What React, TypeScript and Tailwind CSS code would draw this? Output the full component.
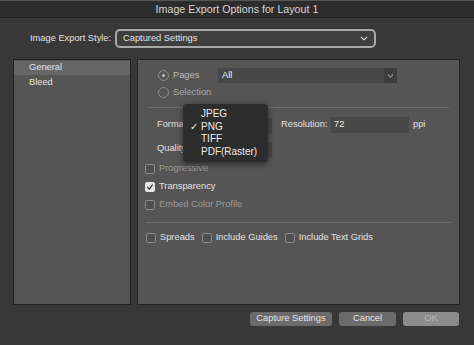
import React from 'react';

const Chevron = ({ className = '' }: { className?: string }) => (
    <svg viewBox="0 0 10 6" className={className} fill="none" stroke="currentColor" strokeWidth="1.4" strokeLinecap="round" strokeLinejoin="round">
        <path d="M1.5 1.2 L5 4.6 L8.5 1.2" />
    </svg>
);

const Checkbox = ({ checked, label, dim }: { checked?: boolean; label: string; dim?: boolean }) => (
    <div className="flex items-center gap-[4px] h-[10px]">
        <div className={`w-[10px] h-[10px] rounded-[2px] flex items-center justify-center ${checked ? 'bg-[#e6e6e6]' : 'border border-[#8a8a8a] bg-[#4f4f4f]'}`}>
            {checked && (
                <svg viewBox="0 0 10 10" className="w-[8px] h-[8px]" fill="none" stroke="#333" strokeWidth="1.6" strokeLinecap="round" strokeLinejoin="round">
                    <path d="M2 5.2 L4.2 7.6 L8 2.4" />
                </svg>
            )}
        </div>
        <span className={`whitespace-nowrap ${dim ? 'text-[#9a9a9a]' : 'text-[#e2e2e2]'}`}>{label}</span>
    </div>
);

const App: React.FC = () => {
    return (
        <div className="w-[474px] h-[345px] bg-[#383838] flex flex-col text-[9.3px] text-[#e2e2e2] overflow-hidden" style={{ fontFamily: '"Liberation Sans", Arial, sans-serif' }}>
            {/* title bar */}
            <div className="h-[18px] bg-[#2c2c2c] border-t border-[#555] border-b border-b-[#242424] flex items-center justify-center text-[10.7px] text-[#d6d6d6]">
                Image Export Options for Layout 1
            </div>

            {/* export style row */}
            <div className="flex items-center mt-[11px] h-[19px]">
                <span className="ml-[30px] w-[85px] whitespace-nowrap">Image Export Style:</span>
                <div className="w-[261px] h-[19px] rounded-[5px] border-2 border-[#a8a8a8] bg-[#3f3f3f] flex items-center justify-between pl-[6px] pr-[6px]">
                    <span>Captured Settings</span>
                    <Chevron className="w-[8px] h-[5px] text-[#ddd]" />
                </div>
            </div>

            {/* panels */}
            <div className="flex mt-[11px] ml-[13px] gap-[6px] h-[246px]">
                <div className="w-[118px] bg-[#555555] border border-[#222] flex flex-col pt-px">
                    <div className="h-[14px] bg-[#666666] pl-[15px] flex items-center">General</div>
                    <div className="h-[15px] pl-[15px] flex items-center">Bleed</div>
                </div>

                <div className="relative w-[323px] bg-[#555555] border border-[#222] flex flex-col">
                    {/* pages */}
                    <div className="flex flex-col gap-[2px] pt-[8px] pl-[20px]">
                        <div className="flex items-center h-[15px]">
                            <div className="w-[11px] h-[11px] rounded-full border border-[#8a8a8a] flex items-center justify-center">
                                <div className="w-[3px] h-[3px] rounded-full bg-[#bbb]" />
                            </div>
                            <span className="ml-[4px] text-[#bdbdbd] w-[45px]">Pages</span>
                            <div className="w-[179px] h-[15px] bg-[#474747] flex items-center justify-between pl-[4px]">
                                <span className="text-[#f0f0f0]">All</span>
                                <div className="w-[13px] h-[15px] bg-[#3d3d3d] flex items-center justify-center">
                                    <Chevron className="w-[7px] h-[4px] text-[#ccc]" />
                                </div>
                            </div>
                        </div>
                        <div className="flex items-center h-[15px]">
                            <div className="w-[11px] h-[11px] rounded-full border border-[#8a8a8a]" />
                            <span className="ml-[4px] text-[#a8a8a8]">Selection</span>
                        </div>
                    </div>

                    <div className="mt-[7px] mx-[10px] border-t border-[#6c6c6c]" />

                    {/* format / resolution */}
                    <div className="flex items-center mt-[9px] h-[16px] pl-[19px]">
                        <span className="w-[57px]">Format:</span>
                        <div className="w-[58px] h-[15px] bg-[#474747] flex items-center justify-end pr-[3px]">
                            <Chevron className="w-[6px] h-[4px] text-[#aaa]" />
                        </div>
                        <span className="ml-[9px] w-[50px] whitespace-nowrap">Resolution:</span>
                        <div className="w-[78px] h-[16px] bg-[#474747] flex items-center pl-[3px] text-[#f0f0f0]">72</div>
                        <span className="ml-[4px]">ppi</span>
                    </div>
                    <div className="flex items-center mt-[8px] h-[16px] pl-[19px]">
                        <span className="w-[57px]">Quality:</span>
                        <div className="w-[58px] h-[15px] bg-[#474747] flex items-center justify-end pr-[3px]">
                            <Chevron className="w-[6px] h-[4px] text-[#aaa]" />
                        </div>
                    </div>

                    {/* checkboxes */}
                    <div className="flex flex-col gap-[8px] mt-[7px] pl-[7px]">
                        <Checkbox label="Progressive" dim />
                        <Checkbox label="Transparency" checked />
                        <Checkbox label="Embed Color Profile" dim />
                    </div>

                    <div className="mt-[12px] mx-[8px] border-t border-[#6c6c6c]" />

                    <div className="flex items-center gap-[7px] mt-[10px] pl-[8px]">
                        <Checkbox label="Spreads" />
                        <Checkbox label="Include Guides" />
                        <Checkbox label="Include Text Grids" />
                    </div>

                    {/* format menu popup */}
                    <div className="absolute left-[45px] top-[44px] w-[85px] h-[58px] bg-[#2d2d2d] rounded-[4px] shadow-[0_2px_6px_rgba(0,0,0,0.5)] flex flex-col pt-[3px] text-[#ececec] text-[10px]">
                        {['JPEG', 'PNG', 'TIFF', 'PDF(Raster)'].map(item => (
                            <div key={item} className="h-[12.7px] flex items-center">
                                <span className="w-[18px] pl-[4px] text-center">{item === 'PNG' ? '✓' : ''}</span>
                                <span>{item}</span>
                            </div>
                        ))}
                    </div>
                </div>
            </div>

            {/* buttons */}
            <div className="flex justify-end gap-[7px] mt-[7px] pr-[15px]">
                <div className="w-[82px] h-[14px] rounded-[3px] bg-[#6b6b6b] flex items-center justify-center">Capture Settings</div>
                <div className="w-[57px] h-[14px] rounded-[3px] bg-[#6b6b6b] flex items-center justify-center">Cancel</div>
                <div className="w-[56px] h-[14px] rounded-[3px] bg-[#8c8c8c] flex items-center justify-center text-[#b8b8b8]">OK</div>
            </div>
        </div>
    );
};

export default App;
